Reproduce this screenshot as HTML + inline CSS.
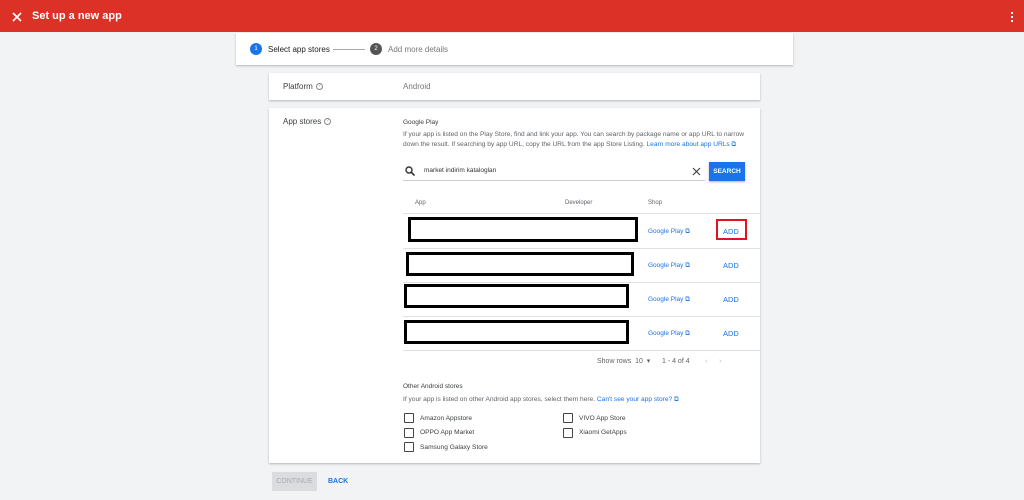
<!DOCTYPE html>
<html><head><style>
*{margin:0;padding:0;box-sizing:border-box}
body{width:1024px;height:500px;background:#f1f3f4;font-family:"Liberation Sans",sans-serif;position:relative;overflow:hidden;color:#3c4043}
.a{position:absolute;white-space:nowrap}
.card{position:absolute;background:#fff;box-shadow:0 1px 2px rgba(0,0,0,.25)}
.s{font-size:7px;color:#5f6368}
.link{color:#1a73e8;font-size:7px}
.blk{position:absolute;border:3px solid #000;background:#fff}
.hr{position:absolute;left:403px;width:357px;height:1px;background:#e0e0e0}
.cb{position:absolute;width:10px;height:10px;border:1.5px solid #444;border-radius:1px}
.q{display:inline-block;width:7px;height:7px;border:1px solid #888;border-radius:50%;vertical-align:middle;margin-left:3px;font-size:5px;text-align:center;line-height:5px;color:#888}
</style></head><body>
<div class="a" style="left:0;top:0;width:1024px;height:32px;background:#db3127"></div>
<svg class="a" style="left:12px;top:12px" width="10" height="10"><path d="M1 1L9 9M9 1L1 9" stroke="#fff" stroke-width="1.6"/></svg>
<div class="a" style="left:32px;top:10px;color:#fff;font-size:11px;font-weight:bold">Set up a new app</div>
<div class="a" style="left:1011px;top:12px;width:2px;height:2px;background:#fff;box-shadow:0 4px #fff,0 8px #fff"></div>

<div class="card" style="left:236px;top:33px;width:557px;height:32px"></div>
<div class="a" style="left:250px;top:43px;width:12px;height:12px;border-radius:50%;background:#1a73e8;color:#fff;font-size:6px;text-align:center;line-height:12px">1</div>
<div class="a" style="left:268px;top:45px;font-size:8px;color:#202124">Select app stores</div>
<div class="a" style="left:333px;top:49px;width:32px;height:1px;background:#aaa"></div>
<div class="a" style="left:370px;top:43px;width:12px;height:12px;border-radius:50%;background:#555;color:#fff;font-size:6px;text-align:center;line-height:12px">2</div>
<div class="a" style="left:388px;top:45px;font-size:8px;color:#777">Add more details</div>

<div class="card" style="left:269px;top:73px;width:491px;height:27px"></div>
<div class="a" style="left:283px;top:82px;font-size:8px">Platform<span class="q">?</span></div>
<div class="a" style="left:403px;top:82px;font-size:8px;color:#777">Android</div>

<div class="card" style="left:269px;top:108px;width:491px;height:355px"></div>
<div class="a" style="left:283px;top:117px;font-size:8px">App stores<span class="q">?</span></div>
<div class="a" style="left:403px;top:119px;font-size:6.5px;color:#3c4043">Google Play</div>
<div class="a s" style="left:403px;top:130px;font-size:6.6px;line-height:10px">If your app is listed on the Play Store, find and link your app. You can search by package name or app URL to narrow<br>down the result. If searching by app URL, copy the URL from the app Store Listing. <span style="color:#1a73e8">Learn more about app URLs ⧉</span></div>
<svg class="a" style="left:405px;top:166px" width="10" height="10"><circle cx="4" cy="4" r="3" fill="none" stroke="#333" stroke-width="1.4"/><path d="M6 6L9.5 9.5" stroke="#333" stroke-width="1.6"/></svg>
<div class="a" style="left:424px;top:167px;font-size:6.5px;color:#333">market indirim kataloglan</div>
<div class="a" style="left:403px;top:180px;width:302px;height:1px;background:#ccc"></div>
<svg class="a" style="left:692px;top:167px" width="9" height="9"><path d="M1 1L8 8M8 1L1 8" stroke="#444" stroke-width="1.2"/></svg>
<div class="a" style="left:709px;top:162px;width:36px;height:19px;background:#1a73e8;color:#fff;font-size:6.5px;font-weight:bold;text-align:center;line-height:19px;box-shadow:0 1px 2px rgba(0,0,0,.3)">SEARCH</div>

<div class="a s" style="left:415px;top:200px;font-size:6px">App</div>
<div class="a s" style="left:565px;top:200px;font-size:6px">Developer</div>
<div class="a s" style="left:648px;top:200px;font-size:6px">Shop</div>
<div class="hr" style="top:213px"></div>
<div class="hr" style="top:248px"></div>
<div class="hr" style="top:282px"></div>
<div class="hr" style="top:316px"></div>
<div class="hr" style="top:350px"></div>
<div class="blk" style="left:408px;top:217px;width:230px;height:25px"></div>
<div class="blk" style="left:406px;top:252px;width:228px;height:24px"></div>
<div class="blk" style="left:404px;top:284px;width:225px;height:24px"></div>
<div class="blk" style="left:404px;top:320px;width:225px;height:24px"></div>
<div class="a link" style="left:648px;top:228px;font-size:6.5px">Google Play ⧉</div>
<div class="a link" style="left:648px;top:262px;font-size:6.5px">Google Play ⧉</div>
<div class="a link" style="left:648px;top:296px;font-size:6.5px">Google Play ⧉</div>
<div class="a link" style="left:648px;top:330px;font-size:6.5px">Google Play ⧉</div>
<div class="a" style="left:716px;top:219px;width:31px;height:21px;border:2px solid #e0141e"></div>
<div class="a link" style="left:723px;top:227px;font-size:7.5px">ADD</div>
<div class="a link" style="left:723px;top:261px;font-size:7.5px">ADD</div>
<div class="a link" style="left:723px;top:295px;font-size:7.5px">ADD</div>
<div class="a link" style="left:723px;top:329px;font-size:7.5px">ADD</div>
<div class="a s" style="left:597px;top:357px;font-size:7px">Show rows &nbsp;10 &nbsp;▾ &nbsp;&nbsp;&nbsp;&nbsp; 1 - 4 of 4 &nbsp;&nbsp;&nbsp;&nbsp;&nbsp;&nbsp; <span style="color:#bbb">‹ &nbsp;&nbsp;&nbsp;&nbsp; ›</span></div>

<div class="a" style="left:403px;top:383px;font-size:6.5px">Other Android stores</div>
<div class="a s" style="left:403px;top:396px;font-size:6.6px">If your app is listed on other Android app stores, select them here. <span style="color:#1a73e8">Can't see your app store? ⧉</span></div>
<div class="cb" style="left:404px;top:413px"></div><div class="a" style="left:420px;top:415px;font-size:6.6px">Amazon Appstore</div>
<div class="cb" style="left:404px;top:428px"></div><div class="a" style="left:420px;top:429px;font-size:6.6px">OPPO App Market</div>
<div class="cb" style="left:404px;top:442px"></div><div class="a" style="left:420px;top:444px;font-size:6.6px">Samsung Galaxy Store</div>
<div class="cb" style="left:563px;top:413px"></div><div class="a" style="left:579px;top:415px;font-size:6.6px">VIVO App Store</div>
<div class="cb" style="left:563px;top:428px"></div><div class="a" style="left:579px;top:429px;font-size:6.6px">Xiaomi GetApps</div>

<div class="a" style="left:272px;top:472px;width:45px;height:19px;background:#dadce0;color:#aaa;font-size:7px;text-align:center;line-height:19px">CONTINUE</div>
<div class="a" style="left:328px;top:478px;color:#1a73e8;font-size:7px;font-weight:bold">BACK</div>
</body></html>
